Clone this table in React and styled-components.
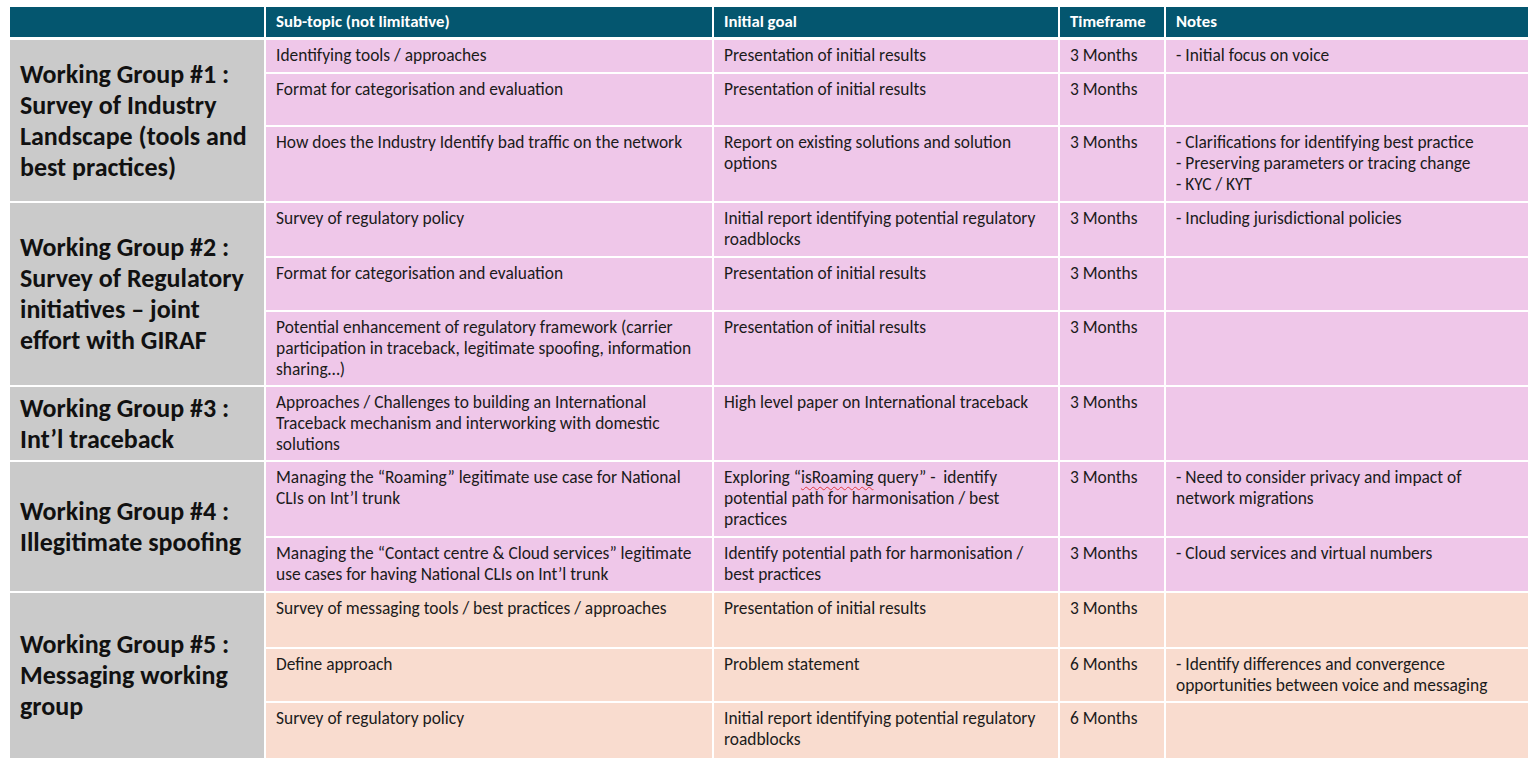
import styled, { createGlobalStyle } from 'styled-components'

const GlobalStyle = createGlobalStyle`
  html, body {
    margin: 0;
    padding: 0;
    background: #ffffff;
  }
  body {
    font-family: Carlito, Lato, "Open Sans", sans-serif;
    color: #1b1b1b;
  }
`

const COLUMNS = '254px 446px 344px 104px 362px'

const tones = {
  pink: '#efc7e9',
  peach: '#f9dccf',
}

const Page = styled.div`
  width: 1536px;
  height: 768px;
  box-sizing: border-box;
  padding: 7px 0 0 10px;
  overflow: hidden;
`

const Table = styled.div`
  display: flex;
  flex-direction: column;
  width: 1518px;
`

const HeaderRow = styled.div`
  display: grid;
  grid-template-columns: ${COLUMNS};
  column-gap: 2px;
  height: 30px;
  margin-bottom: 3px;
`

const HeaderCell = styled.div`
  background: #04566f;
  color: #ffffff;
  font-weight: 700;
  font-size: 16.8px;
  line-height: 30px;
  padding: 0 10px;
  white-space: nowrap;
`

const Body = styled.div`
  display: grid;
  grid-template-columns: ${COLUMNS};
  gap: 2px;
`

const GroupCell = styled.div`
  grid-column: 1;
  grid-row: span ${p => p.$span};
  background: #cacaca;
  display: flex;
  flex-direction: column;
  justify-content: center;
  padding: 0 10px;
  font-weight: 700;
  font-size: 26px;
  line-height: 31px;
  color: #111111;
  white-space: nowrap;
`

const Cell = styled.div`
  background: ${p => tones[p.$tone]};
  padding: 5px 10px 0;
  font-size: 17.4px;
  line-height: 21px;
  white-space: nowrap;
  overflow: hidden;
`

const Line = styled.div``

const Misspelt = styled.span`
  text-decoration: underline wavy #e0393e;
  text-decoration-thickness: 1px;
  text-underline-offset: 3px;
`

const groups = [
  {
    title: ['Working Group #1 :', 'Survey of Industry', 'Landscape (tools and', 'best practices)'],
    tone: 'pink',
    rows: [
      { h: 32, topic: ['Identifying tools / approaches'], goal: ['Presentation of initial results'], time: '3 Months', notes: ['- Initial focus on voice'] },
      { h: 51, topic: ['Format for categorisation and evaluation'], goal: ['Presentation of initial results'], time: '3 Months', notes: [] },
      {
        h: 74,
        topic: ['How does the Industry Identify bad traffic on the network'],
        goal: ['Report on existing solutions and solution', 'options'],
        time: '3 Months',
        notes: ['- Clarifications for identifying best practice', '- Preserving parameters or tracing change', '- KYC / KYT'],
      },
    ],
  },
  {
    title: ['Working Group #2 :', 'Survey of Regulatory', 'initiatives – joint', 'effort with GIRAF'],
    tone: 'pink',
    rows: [
      { h: 53, topic: ['Survey of regulatory policy'], goal: ['Initial report identifying potential regulatory', 'roadblocks'], time: '3 Months', notes: ['- Including jurisdictional policies'] },
      { h: 52, topic: ['Format for categorisation and evaluation'], goal: ['Presentation of initial results'], time: '3 Months', notes: [] },
      {
        h: 73,
        topic: ['Potential enhancement of regulatory framework (carrier', 'participation in traceback, legitimate spoofing, information', 'sharing…)'],
        goal: ['Presentation of initial results'],
        time: '3 Months',
        notes: [],
      },
    ],
  },
  {
    title: ['Working Group #3 :', 'Int’l traceback'],
    tone: 'pink',
    rows: [
      {
        h: 73,
        topic: ['Approaches / Challenges to building an International', 'Traceback mechanism and interworking with domestic', 'solutions'],
        goal: ['High level paper on International traceback'],
        time: '3 Months',
        notes: [],
      },
    ],
  },
  {
    title: ['Working Group #4 :', 'Illegitimate spoofing'],
    tone: 'pink',
    rows: [
      {
        h: 74,
        topic: ['Managing the “Roaming” legitimate use case for National', 'CLIs on Int’l trunk'],
        goal: [
          <>Exploring “<Misspelt>isRoaming</Misspelt> query” -&nbsp; identify</>,
          'potential path for harmonisation / best',
          'practices',
        ],
        time: '3 Months',
        notes: ['- Need to consider privacy and impact of', 'network migrations'],
      },
      {
        h: 53,
        topic: ['Managing the “Contact centre & Cloud services” legitimate', 'use cases for having National CLIs on Int’l trunk'],
        goal: ['Identify potential path for harmonisation /', 'best practices'],
        time: '3 Months',
        notes: ['- Cloud services and virtual numbers'],
      },
    ],
  },
  {
    title: ['Working Group #5 :', 'Messaging working', 'group'],
    tone: 'peach',
    rows: [
      { h: 54, topic: ['Survey of messaging tools / best practices / approaches'], goal: ['Presentation of initial results'], time: '3 Months', notes: [] },
      {
        h: 52,
        topic: ['Define approach'],
        goal: ['Problem statement'],
        time: '6 Months',
        notes: ['- Identify differences and convergence', 'opportunities between voice and messaging'],
      },
      { h: 55, topic: ['Survey of regulatory policy'], goal: ['Initial report identifying potential regulatory', 'roadblocks'], time: '6 Months', notes: [] },
    ],
  },
]

const Lines = ({ lines }) => lines.map((l, i) => <Line key={i}>{l}</Line>)

export default function App() {
  const rowHeights = groups.flatMap(g => g.rows.map(r => `${r.h}px`)).join(' ')

  return (
    <Page>
      <GlobalStyle />
      <Table>
        <HeaderRow>
          <HeaderCell />
          <HeaderCell>Sub-topic (not limitative)</HeaderCell>
          <HeaderCell>Initial goal</HeaderCell>
          <HeaderCell>Timeframe</HeaderCell>
          <HeaderCell>Notes</HeaderCell>
        </HeaderRow>
        <Body style={{ gridTemplateRows: rowHeights }}>
          {groups.map((g, gi) =>
            g.rows.map((r, ri) => (
              <>
                {ri === 0 && (
                  <GroupCell key={`g${gi}`} $span={g.rows.length}>
                    <Lines lines={g.title} />
                  </GroupCell>
                )}
                <Cell $tone={g.tone}><Lines lines={r.topic} /></Cell>
                <Cell $tone={g.tone}><Lines lines={r.goal} /></Cell>
                <Cell $tone={g.tone}>{r.time}</Cell>
                <Cell $tone={g.tone}><Lines lines={r.notes} /></Cell>
              </>
            ))
          )}
        </Body>
      </Table>
    </Page>
  )
}
